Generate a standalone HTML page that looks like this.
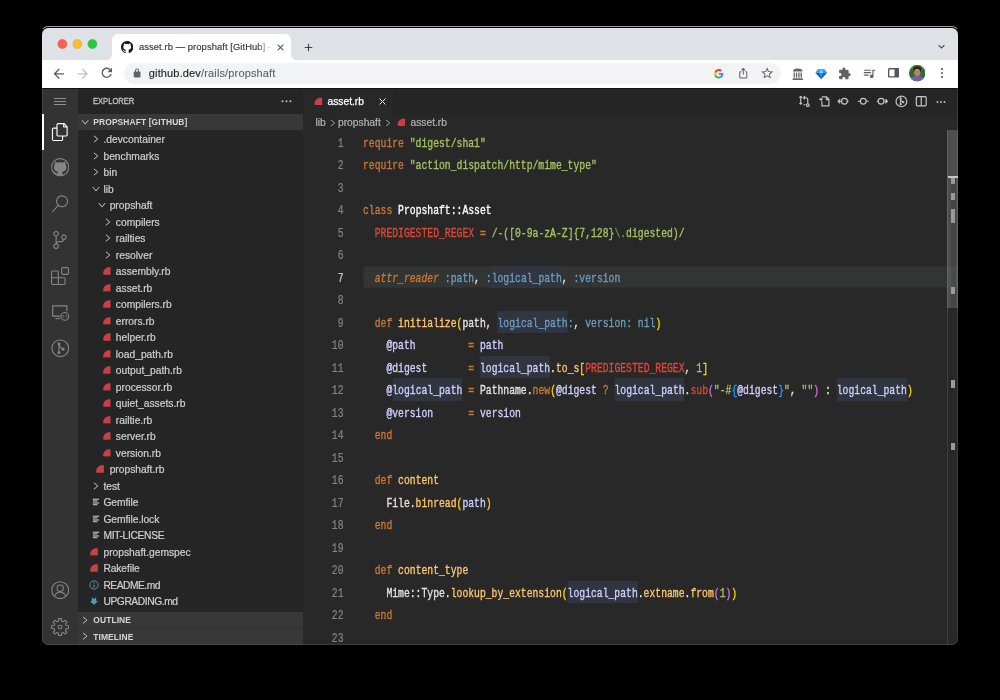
<!DOCTYPE html>
<html><head><meta charset="utf-8"><title>asset.rb — propshaft [GitHub]</title>
<style>
*{box-sizing:border-box}
html,body{margin:0;padding:0;width:1000px;height:700px;overflow:hidden;background:#000}
body{font-family:"Liberation Sans",sans-serif;position:relative}
.win{position:absolute;left:42px;top:27.8px;width:915.9px;height:617px;overflow:hidden;border-radius:6.5px;background:#282828}
.ring{position:absolute;left:40.2px;top:26.1px;width:919.6px;height:30px;border-radius:8.5px 8.5px 0 0;border:0.9px solid transparent;border-top-color:#9a9a9a;border-bottom:0}
.edge{position:absolute;left:42px;top:27.8px;width:915.9px;height:617px;border-radius:6.5px;box-shadow:inset 0 0 0 0.8px rgba(255,255,255,0.13)}
.pg{position:absolute;left:-42px;top:-27.8px;width:1000px;height:700px;will-change:transform;-webkit-font-smoothing:antialiased}
.abs{position:absolute}
/* chrome */
.tabbar{left:42px;top:27px;width:916px;height:33px;background:#dee1e6}
.tab{left:112px;top:34px;width:179px;height:26px;background:#fff;border-radius:6px 6px 0 0}
.tabcurve{width:6px;height:6px;top:54px;background:radial-gradient(circle at 0 0,#dee1e6 6px,#fff 6.5px)}
.toolbar{left:42px;top:60px;width:916px;height:27.5px;background:#fff}
.tsep{left:42px;top:87.5px;width:916px;height:1.3px;background:#131313}
.omni{left:123.6px;top:63px;width:657.2px;height:20.8px;border-radius:10.4px;background:#f1f3f4}
.tl{width:9.2px;height:9.2px;border-radius:50%;top:39.4px}
.ttitle{left:139px;top:41.1px;font-size:9.4px;color:#33373b;-webkit-text-stroke:0.15px currentColor;white-space:nowrap;width:134px;overflow:hidden;letter-spacing:0.08px;-webkit-mask-image:linear-gradient(90deg,#000 118px,transparent 133px)}
.url{left:148.8px;top:67px;font-size:11px;letter-spacing:0.145px;-webkit-text-stroke:0.12px currentColor;color:#202124;white-space:nowrap}
.url i{font-style:normal;color:#5f6368}
/* vscode */
.act{left:42px;top:88px;width:36px;height:557px;background:#333333}
.side{left:78px;top:88px;width:225px;height:557px;background:#252526}
.edtabs{left:303px;top:88px;width:655px;height:26.25px;background:#252526}
.edtab{left:303px;top:88px;width:90px;height:26.25px;background:#282828}
.editor{left:303px;top:114.25px;width:655px;height:531px;background:#282828}
.shead{left:78px;width:225px;height:16.5px;background:#383838}
.shead b{position:absolute;left:15.3px;top:3.3px;font-size:8.45px;color:#d6d6d6;letter-spacing:0.1px;white-space:nowrap}
.row{position:absolute;left:0;width:303px;height:16.5px}
.row .tx{position:absolute;top:3.4px;font-size:10.25px;color:#d0d0d0;white-space:nowrap;-webkit-text-stroke:0.2px currentColor}
.row .ic{position:absolute;top:0;height:16.5px;width:0}
.row .ic svg{position:absolute;left:0;top:50%;transform:translate(-50%,-50%)}
.ln{position:absolute;left:303px;width:40.5px;height:22.5px;line-height:22.5px;margin-top:2px;-webkit-text-stroke:0.2px currentColor;text-align:right;font-family:"Liberation Mono",monospace;font-size:12.2px;color:#858585;transform:scaleX(0.7992);transform-origin:100% 50%}
.ln.cur{color:#c6c6c6}
.cl{position:absolute;left:362.7px;height:22.5px;line-height:22.5px;margin-top:2px;-webkit-text-stroke:0.34px currentColor;font-family:"Liberation Mono",monospace;font-size:12.2px;white-space:pre;transform:scaleX(0.7992);transform-origin:0 50%;color:#e6e1dc}
.k{color:#cc7833}.s{color:#a5c261}.c{color:#da4939}.y{color:#ffc66d}.w{color:#ffffff}.v{color:#e6e1dc}
.i{color:#d0d0ff}.b{color:#6d9cbe}.g{color:#ffd700}.p{color:#da70d6}.u{color:#179fff}.e{color:#519f50}.pn{color:#e6e1dc}
.hl{background:#30353f;display:inline-block;height:22.5px;position:relative;top:0;margin-top:-2px;padding-top:2px;vertical-align:top}
.curline{left:362.7px;top:265.6px;width:596px;height:22.4px;background:#323534;border:1.6px solid #2d2f2f;border-right:0}
.sb{left:947.2px;top:130.4px;width:11px;height:515px;border-left:1px solid #3d3d3d}
.slider{left:947.2px;top:130.3px;width:11px;height:177.7px;background:rgba(130,130,130,0.42);border-left:1.2px solid rgba(150,150,150,0.14)}
.mk{position:absolute;left:951.1px;width:4px;background:#999999}
.it{font-style:italic}
.bc{top:117px;font-size:10.25px;color:#b4b4b4;-webkit-text-stroke:0.2px currentColor;white-space:nowrap}
</style></head><body>
<div class="ring"></div>
<div class="win"><div class="pg">
<!-- chrome tab strip -->
<div class="abs tabbar"></div>
<div class="abs tab"></div>
<div class="abs tabcurve" style="left:106px;background:radial-gradient(circle at 0 0,#dee1e6 5.7px,#fff 6.3px)"></div>
<div class="abs tabcurve" style="left:291px;background:radial-gradient(circle at 100% 0,#dee1e6 5.7px,#fff 6.3px)"></div>
<svg class="abs" style="left:55px;top:37px" width="45" height="14" viewBox="0 0 45 14"><circle cx="7.4" cy="7" r="4.5" fill="#fe5f57" stroke="#e24b41" stroke-width="0.5"/><circle cx="22.4" cy="7" r="4.5" fill="#febc2e" stroke="#e1a325" stroke-width="0.5"/><circle cx="37.4" cy="7" r="4.5" fill="#28c840" stroke="#1eab2e" stroke-width="0.5"/></svg>
<div class="abs ttitle">asset.rb — propshaft [GitHub] — Visual Studio Code</div>
<div class="abs toolbar"></div>
<div class="abs omni"></div>
<div class="abs url">github.dev<i>/rails/propshaft</i></div>
<!-- vscode -->
<div class="abs act"></div>
<div class="abs side"></div>
<div class="abs edtabs"></div>
<div class="abs edtab"></div>
<div class="abs editor"></div>
<div class="abs" style="left:93.3px;top:96.3px;font-size:8.6px;color:#c4c4c4;-webkit-text-stroke:0.3px currentColor;transform:scaleX(0.883);transform-origin:0 50%">EXPLORER</div>
<div class="abs shead" style="top:114.4px;height:15.8px"><b style="top:2.6px">PROPSHAFT [GITHUB]</b></div>
<div class="row" style="top:130.75px"><span class="ic" style="left:95.95px"><svg class="tw" viewBox="0 0 16 16" width="10.6" height="10.6"><path d="M4.8 3.2 L10.8 8 L4.8 12.8" stroke="#c5c5c5" stroke-width="1.5" fill="none"/></svg></span><span class="tx" style="left:103.45px">.devcontainer</span></div>
<div class="row" style="top:147.25px"><span class="ic" style="left:95.95px"><svg class="tw" viewBox="0 0 16 16" width="10.6" height="10.6"><path d="M4.8 3.2 L10.8 8 L4.8 12.8" stroke="#c5c5c5" stroke-width="1.5" fill="none"/></svg></span><span class="tx" style="left:103.45px">benchmarks</span></div>
<div class="row" style="top:163.75px"><span class="ic" style="left:95.95px"><svg class="tw" viewBox="0 0 16 16" width="10.6" height="10.6"><path d="M4.8 3.2 L10.8 8 L4.8 12.8" stroke="#c5c5c5" stroke-width="1.5" fill="none"/></svg></span><span class="tx" style="left:103.45px">bin</span></div>
<div class="row" style="top:180.25px"><span class="ic" style="left:95.95px"><svg class="tw" viewBox="0 0 16 16" width="10.6" height="10.6"><path d="M3.2 5 L8 11 L12.8 5" stroke="#c5c5c5" stroke-width="1.5" fill="none"/></svg></span><span class="tx" style="left:103.45px">lib</span></div>
<div class="row" style="top:196.75px"><span class="ic" style="left:102.15px"><svg class="tw" viewBox="0 0 16 16" width="10.6" height="10.6"><path d="M3.2 5 L8 11 L12.8 5" stroke="#c5c5c5" stroke-width="1.5" fill="none"/></svg></span><span class="tx" style="left:109.65px">propshaft</span></div>
<div class="row" style="top:213.25px"><span class="ic" style="left:108.35000000000001px"><svg class="tw" viewBox="0 0 16 16" width="10.6" height="10.6"><path d="M4.8 3.2 L10.8 8 L4.8 12.8" stroke="#c5c5c5" stroke-width="1.5" fill="none"/></svg></span><span class="tx" style="left:115.85000000000001px">compilers</span></div>
<div class="row" style="top:229.75px"><span class="ic" style="left:108.35000000000001px"><svg class="tw" viewBox="0 0 16 16" width="10.6" height="10.6"><path d="M4.8 3.2 L10.8 8 L4.8 12.8" stroke="#c5c5c5" stroke-width="1.5" fill="none"/></svg></span><span class="tx" style="left:115.85000000000001px">railties</span></div>
<div class="row" style="top:246.25px"><span class="ic" style="left:108.35000000000001px"><svg class="tw" viewBox="0 0 16 16" width="10.6" height="10.6"><path d="M4.8 3.2 L10.8 8 L4.8 12.8" stroke="#c5c5c5" stroke-width="1.5" fill="none"/></svg></span><span class="tx" style="left:115.85000000000001px">resolver</span></div>
<div class="row" style="top:262.75px"><span class="ic" style="left:106.65px"><svg class="fi" viewBox="0 0 16 16" width="8.8" height="8.800"><path d="M3.2 14.8Q1 14.8 1 12.4C1 6 6 1.2 12.4 1.2L15 1.2L15 14.8Z" fill="#cc3e44"/></svg></span><span class="tx" style="left:115.85000000000001px">assembly.rb</span></div>
<div class="row" style="top:279.25px"><span class="ic" style="left:106.65px"><svg class="fi" viewBox="0 0 16 16" width="8.8" height="8.800"><path d="M3.2 14.8Q1 14.8 1 12.4C1 6 6 1.2 12.4 1.2L15 1.2L15 14.8Z" fill="#cc3e44"/></svg></span><span class="tx" style="left:115.85000000000001px">asset.rb</span></div>
<div class="row" style="top:295.75px"><span class="ic" style="left:106.65px"><svg class="fi" viewBox="0 0 16 16" width="8.8" height="8.800"><path d="M3.2 14.8Q1 14.8 1 12.4C1 6 6 1.2 12.4 1.2L15 1.2L15 14.8Z" fill="#cc3e44"/></svg></span><span class="tx" style="left:115.85000000000001px">compilers.rb</span></div>
<div class="row" style="top:312.25px"><span class="ic" style="left:106.65px"><svg class="fi" viewBox="0 0 16 16" width="8.8" height="8.800"><path d="M3.2 14.8Q1 14.8 1 12.4C1 6 6 1.2 12.4 1.2L15 1.2L15 14.8Z" fill="#cc3e44"/></svg></span><span class="tx" style="left:115.85000000000001px">errors.rb</span></div>
<div class="row" style="top:328.75px"><span class="ic" style="left:106.65px"><svg class="fi" viewBox="0 0 16 16" width="8.8" height="8.800"><path d="M3.2 14.8Q1 14.8 1 12.4C1 6 6 1.2 12.4 1.2L15 1.2L15 14.8Z" fill="#cc3e44"/></svg></span><span class="tx" style="left:115.85000000000001px">helper.rb</span></div>
<div class="row" style="top:345.25px"><span class="ic" style="left:106.65px"><svg class="fi" viewBox="0 0 16 16" width="8.8" height="8.800"><path d="M3.2 14.8Q1 14.8 1 12.4C1 6 6 1.2 12.4 1.2L15 1.2L15 14.8Z" fill="#cc3e44"/></svg></span><span class="tx" style="left:115.85000000000001px">load_path.rb</span></div>
<div class="row" style="top:361.75px"><span class="ic" style="left:106.65px"><svg class="fi" viewBox="0 0 16 16" width="8.8" height="8.800"><path d="M3.2 14.8Q1 14.8 1 12.4C1 6 6 1.2 12.4 1.2L15 1.2L15 14.8Z" fill="#cc3e44"/></svg></span><span class="tx" style="left:115.85000000000001px">output_path.rb</span></div>
<div class="row" style="top:378.25px"><span class="ic" style="left:106.65px"><svg class="fi" viewBox="0 0 16 16" width="8.8" height="8.800"><path d="M3.2 14.8Q1 14.8 1 12.4C1 6 6 1.2 12.4 1.2L15 1.2L15 14.8Z" fill="#cc3e44"/></svg></span><span class="tx" style="left:115.85000000000001px">processor.rb</span></div>
<div class="row" style="top:394.75px"><span class="ic" style="left:106.65px"><svg class="fi" viewBox="0 0 16 16" width="8.8" height="8.800"><path d="M3.2 14.8Q1 14.8 1 12.4C1 6 6 1.2 12.4 1.2L15 1.2L15 14.8Z" fill="#cc3e44"/></svg></span><span class="tx" style="left:115.85000000000001px">quiet_assets.rb</span></div>
<div class="row" style="top:411.25px"><span class="ic" style="left:106.65px"><svg class="fi" viewBox="0 0 16 16" width="8.8" height="8.800"><path d="M3.2 14.8Q1 14.8 1 12.4C1 6 6 1.2 12.4 1.2L15 1.2L15 14.8Z" fill="#cc3e44"/></svg></span><span class="tx" style="left:115.85000000000001px">railtie.rb</span></div>
<div class="row" style="top:427.75px"><span class="ic" style="left:106.65px"><svg class="fi" viewBox="0 0 16 16" width="8.8" height="8.800"><path d="M3.2 14.8Q1 14.8 1 12.4C1 6 6 1.2 12.4 1.2L15 1.2L15 14.8Z" fill="#cc3e44"/></svg></span><span class="tx" style="left:115.85000000000001px">server.rb</span></div>
<div class="row" style="top:444.25px"><span class="ic" style="left:106.65px"><svg class="fi" viewBox="0 0 16 16" width="8.8" height="8.800"><path d="M3.2 14.8Q1 14.8 1 12.4C1 6 6 1.2 12.4 1.2L15 1.2L15 14.8Z" fill="#cc3e44"/></svg></span><span class="tx" style="left:115.85000000000001px">version.rb</span></div>
<div class="row" style="top:460.75px"><span class="ic" style="left:100.45px"><svg class="fi" viewBox="0 0 16 16" width="8.8" height="8.800"><path d="M3.2 14.8Q1 14.8 1 12.4C1 6 6 1.2 12.4 1.2L15 1.2L15 14.8Z" fill="#cc3e44"/></svg></span><span class="tx" style="left:109.65px">propshaft.rb</span></div>
<div class="row" style="top:477.25px"><span class="ic" style="left:95.95px"><svg class="tw" viewBox="0 0 16 16" width="10.6" height="10.6"><path d="M4.8 3.2 L10.8 8 L4.8 12.8" stroke="#c5c5c5" stroke-width="1.5" fill="none"/></svg></span><span class="tx" style="left:103.45px">test</span></div>
<div class="row" style="top:493.75px"><span class="ic" style="left:95.85000000000001px"><svg class="fi" viewBox="0 0 16 16" width="7.4" height="8.400"><path d="M1 2h14M1 6h10M1 10h14M1 14h10" stroke="#d4d7d6" stroke-width="2.2" fill="none"/></svg></span><span class="tx" style="left:103.45px;letter-spacing:-0.05px">Gemfile</span></div>
<div class="row" style="top:510.25px"><span class="ic" style="left:95.85000000000001px"><svg class="fi" viewBox="0 0 16 16" width="7.4" height="8.400"><path d="M1 2h14M1 6h10M1 10h14M1 14h10" stroke="#d4d7d6" stroke-width="2.2" fill="none"/></svg></span><span class="tx" style="left:103.45px;letter-spacing:-0.05px">Gemfile.lock</span></div>
<div class="row" style="top:526.75px"><span class="ic" style="left:95.85000000000001px"><svg class="fi" viewBox="0 0 16 16" width="7.4" height="8.400"><path d="M1 2h14M1 6h10M1 10h14M1 14h10" stroke="#d4d7d6" stroke-width="2.2" fill="none"/></svg></span><span class="tx" style="left:103.45px;letter-spacing:-0.33px">MIT-LICENSE</span></div>
<div class="row" style="top:543.25px"><span class="ic" style="left:94.25px"><svg class="fi" viewBox="0 0 16 16" width="8.8" height="8.800"><path d="M3.2 14.8Q1 14.8 1 12.4C1 6 6 1.2 12.4 1.2L15 1.2L15 14.8Z" fill="#cc3e44"/></svg></span><span class="tx" style="left:103.45px">propshaft.gemspec</span></div>
<div class="row" style="top:559.75px"><span class="ic" style="left:94.25px"><svg class="fi" viewBox="0 0 16 16" width="8.8" height="8.800"><path d="M3.2 14.8Q1 14.8 1 12.4C1 6 6 1.2 12.4 1.2L15 1.2L15 14.8Z" fill="#cc3e44"/></svg></span><span class="tx" style="left:103.45px;letter-spacing:-0.1px">Rakefile</span></div>
<div class="row" style="top:576.25px"><span class="ic" style="left:94.45px"><svg class="fi" viewBox="0 0 16 16" width="10" height="10"><circle cx="8" cy="8" r="6.6" stroke="#519aba" stroke-width="1.5" fill="none"/><path d="M8 7v5" stroke="#519aba" stroke-width="1.8"/><circle cx="8" cy="4.6" r="1.1" fill="#519aba"/></svg></span><span class="tx" style="left:103.45px;letter-spacing:-0.5px">README.md</span></div>
<div class="row" style="top:592.75px"><span class="ic" style="left:94.45px"><svg class="fi" viewBox="0 0 16 16" width="9.400" height="9.800"><path d="M4.3 1.5 L8 4.6 L11.7 1.5 V8 H14.8 L8 15 L1.2 8 H4.3 Z" fill="#519aba"/></svg></span><span class="tx" style="left:103.45px;letter-spacing:-0.42px">UPGRADING.md</span></div>
<div class="abs shead" style="top:611.5px"><b>OUTLINE</b></div>
<div class="abs shead" style="top:628px;border-top:1px solid rgba(0,0,0,0.12)"><b>TIMELINE</b></div>
<div class="abs tsep"></div>
<div class="abs" style="left:42px;top:114.25px;width:1.7px;height:36px;background:#ffffff"></div>
<!-- editor tab -->
<div class="abs" style="left:327.5px;top:95.7px;font-size:10.25px;color:#ffffff;-webkit-text-stroke:0.25px #fff">asset.rb</div>
<div class="abs bc" style="left:315.5px">lib</div>
<div class="abs bc" style="left:338px">propshaft</div>
<div class="abs bc" style="left:410.5px">asset.rb</div>
<svg class="abs" style="left:120.70px;top:41.00px" width="12.4" height="12.4" viewBox="0 0 16 16" ><path d="M8 0C3.58 0 0 3.58 0 8c0 3.54 2.29 6.53 5.47 7.59.4.07.55-.17.55-.38 0-.19-.01-.82-.01-1.49-2.01.37-2.53-.49-2.69-.94-.09-.23-.48-.94-.82-1.13-.28-.15-.68-.52-.01-.53.63-.01 1.08.58 1.23.82.72 1.21 1.87.87 2.33.66.07-.52.28-.87.51-1.07-1.78-.2-3.64-.89-3.64-3.95 0-.87.31-1.59.82-2.15-.08-.2-.36-1.02.08-2.12 0 0 .67-.21 2.2.82.64-.18 1.32-.27 2-.27.68 0 1.36.09 2 .27 1.53-1.04 2.2-.82 2.2-.82.44 1.1.16 1.92.08 2.12.51.56.82 1.27.82 2.15 0 3.07-1.87 3.75-3.65 3.95.29.25.54.73.54 1.48 0 1.07-.01 1.93-.01 2.2 0 .21.15.46.55.38A8.013 8.013 0 0 0 16 8c0-4.42-3.58-8-8-8z" fill="#16191c"/></svg>
<svg class="abs" style="left:274.50px;top:41.50px" width="11" height="11" viewBox="0 0 24 24" ><path d="M19 6.41L17.59 5 12 10.59 6.41 5 5 6.41 10.59 12 5 17.59 6.41 19 12 13.41 17.59 19 19 17.59 13.41 12z" fill="#45494d"/></svg>
<svg class="abs" style="left:301.80px;top:40.50px" width="13" height="13" viewBox="0 0 24 24" ><path d="M19 13h-6v6h-2v-6H5v-2h6V5h2v6h6v2z" fill="#3c4043"/></svg>
<svg class="abs" style="left:934.90px;top:40.30px" width="13" height="13" viewBox="0 0 24 24" ><path d="M7.41 8.59L12 13.17l4.59-4.58L18 10l-6 6-6-6 1.41-1.41z" fill="#3c4043"/></svg>
<svg class="abs" style="left:50.80px;top:65.50px" width="15.6" height="15.6" viewBox="0 0 24 24" ><path d="M20 11H7.83l5.59-5.59L12 4l-8 8 8 8 1.41-1.41L7.83 13H20v-2z" fill="#5a5e63"/></svg>
<svg class="abs" style="left:74.80px;top:65.50px" width="15.6" height="15.6" viewBox="0 0 24 24" ><path d="M12 4l-1.41 1.41L16.17 11H4v2h12.17l-5.58 5.59L12 20l8-8z" fill="#bdc0c4"/></svg>
<svg class="abs" style="left:98.80px;top:65.40px" width="15.6" height="15.6" viewBox="0 0 24 24" ><path d="M17.65 6.35C16.2 4.9 14.21 4 12 4c-4.42 0-7.99 3.58-7.99 8s3.57 8 7.99 8c3.73 0 6.84-2.55 7.73-6h-2.08c-.82 2.33-3.04 4-5.65 4-3.31 0-6-2.69-6-6s2.69-6 6-6c1.66 0 3.14.69 4.22 1.78L13 11h7V4l-2.35 2.35z" fill="#5a5e63"/></svg>
<svg class="abs" style="left:131.50px;top:67.90px" width="10.2" height="10.2" viewBox="0 0 24 24" ><path fill-rule="evenodd" d="M18 8.5h-1.2V6.3c0-2.7-2.1-4.9-4.8-4.9S7.2 3.6 7.2 6.3v2.2H6c-1.1 0-2 .9-2 2v9.6c0 1.1.9 2 2 2h12c1.1 0 2-.9 2-2v-9.6c0-1.1-.9-2-2-2zM9.5 6.3c0-1.4 1.1-2.6 2.5-2.6s2.5 1.2 2.500 2.6v2.2h-5z" fill="#5f6368"/></svg>
<svg class="abs" style="left:713.20px;top:67.80px" width="11.6" height="11.6" viewBox="0 0 24 24" ><path d="M21.35 12.2c0-.7-.06-1.3-.18-1.9H12v3.7h5.250c-.230 1.200-.900 2.200-1.950 2.900v2.400h3.100c1.850-1.700 2.950-4.200 2.950-7.100z" fill="#4285f4"/><path d="M12 21.700c2.600 0 4.800-.850 6.400-2.350l-3.100-2.400c-.850.600-1.950.950-3.300.950-2.500 0-4.650-1.700-5.400-4H3.400v2.500C5 19.500 8.250 21.700 12 21.700z" fill="#34a853"/><path d="M6.600 13.900c-.200-.600-.300-1.200-.300-1.900s.100-1.300.300-1.900V7.600H3.400C2.750 8.900 2.400 10.400 2.400 12s.350 3.100 1 4.400l3.200-2.500z" fill="#fbbc05"/><path d="M12 6.100c1.400 0 2.700.500 3.700 1.450l2.750-2.750C16.800 3.250 14.600 2.300 12 2.300 8.250 2.300 5 4.500 3.400 7.600l3.200 2.500c.750-2.300 2.900-4 5.400-4z" fill="#ea4335"/></svg>
<svg class="abs" style="left:737.50px;top:66.90px" width="10.6" height="12.6" viewBox="0 0 24 28" ><path d="M7.500 10.500H5.500a1.500 1.500 0 0 0-1.500 1.500v11a1.500 1.500 0 0 0 1.500 1.500h13a1.500 1.500 0 0 0 1.500-1.500v-11a1.500 1.500 0 0 0-1.500-1.500h-2" fill="none" stroke="#5f6368" stroke-width="2.300"/><path d="M12 17V3.500M7.800 7.300L12 3.100l4.200 4.200" fill="none" stroke="#5f6368" stroke-width="2.300"/></svg>
<svg class="abs" style="left:759.80px;top:65.80px" width="14.4" height="14.4" viewBox="0 0 24 24" ><path d="M22 9.240l-7.190-.620L12 2 9.190 8.630 2 9.240l5.460 4.730L5.820 21 12 17.270 18.180 21l-1.630-7.030L22 9.240zM12 15.400l-3.760 2.270 1-4.280-3.320-2.880 4.380-.380L12 6.100l1.710 4.040 4.380.380-3.320 2.880 1 4.280L12 15.400z" fill="#5f6368"/></svg>
<svg class="abs" style="left:790.65px;top:66.85px" width="13.5" height="13.5" viewBox="0 0 24 24" ><path d="M3.6 8.200V7.200Q3.600 2.600 12 2.600T20.400 7.200V8.200Z" fill="#5f6368"/><path d="M5.800 9.600v9.200M9.900 9.600v9.200M14.100 9.600v9.200M18.200 9.600v9.200" stroke="#5f6368" stroke-width="2.300"/><rect x="3.400" y="19.400" width="17.200" height="1.500" fill="#5f6368"/><rect x="2.600" y="21.300" width="18.800" height="1.700" fill="#5f6368"/></svg>
<svg class="abs" style="left:815.20px;top:67.60px" width="12.4" height="12.4" viewBox="0 0 24 24" ><path d="M5.500 3h13l4.500 6.500L12 22 1 9.500z" fill="#0f5fc4"/><path d="M5.500 3h13l4.500 6.500H1z" fill="#3aa0f5"/><path d="M8.200 9.500L12 3l3.800 6.500L12 22z" fill="#1e8cf0"/><path d="M8.200 9.500L12 3l3.800 6.500z" fill="#9bd6ff"/></svg>
<svg class="abs" style="left:838.30px;top:66.50px" width="13.4" height="13.4" viewBox="0 0 24 24" ><path d="M20.500 11H19V7c0-1.100-.900-2-2-2h-4V3.500C13 2.120 11.880 1 10.500 1S8 2.120 8 3.500V5H4c-1.100 0-1.990.900-1.990 2v3.800H3.500c1.490 0 2.700 1.210 2.700 2.700s-1.210 2.700-2.700 2.700H2V20c0 1.100.900 2 2 2h3.800v-1.500c0-1.490 1.210-2.700 2.700-2.700 1.490 0 2.700 1.210 2.700 2.700V22H17c1.100 0 2-.900 2-2v-4h1.500c1.380 0 2.500-1.120 2.500-2.500S21.880 11 20.500 11z" fill="#5f6368"/></svg>
<svg class="abs" style="left:861.90px;top:65.90px" width="14.6" height="14.6" viewBox="0 0 24 24" ><path d="M15 6H3v2h12V6zm0 4H3v2h12v-2zM3 16h8v-2H3v2zM17 6v8.180c-.310-.110-.650-.180-1-.180-1.660 0-3 1.340-3 3s1.340 3 3 3 3-1.340 3-3V8h3V6h-5z" fill="#5f6368"/></svg>
<svg class="abs" style="left:887.50px;top:68.40px" width="11.4" height="9.6" viewBox="0 0 22 18" ><rect x="1.200" y="1.200" width="19.600" height="15.600" rx="1.500" fill="none" stroke="#54585d" stroke-width="2.700"/><rect x="12.500" y="1" width="8.500" height="16" fill="#54585d"/></svg>
<svg class="abs" style="left:909.00px;top:65.20px" width="16.4" height="16.4" viewBox="0 0 32 32" ><defs><clipPath id="avc"><circle cx="16" cy="16" r="16"/></clipPath></defs><g clip-path="url(#avc)"><rect width="32" height="32" fill="#2f6b3a"/><rect x="0" y="0" width="32" height="10" fill="#3d7f45"/><ellipse cx="16" cy="9" rx="8" ry="6.500" fill="#2a1f1a"/><ellipse cx="16" cy="14.500" rx="6.200" ry="7.300" fill="#b9805e"/><path d="M2 32c1-8 6-10.500 14-10.500S29 24 30 32z" fill="#7a5aa0"/><path d="M0 26h9v6H0z" fill="#3a8ad0"/></g></svg>
<svg class="abs" style="left:934.80px;top:66.30px" width="14" height="14" viewBox="0 0 24 24" ><circle cx="12" cy="5.200" r="1.900" fill="#5f6368"/><circle cx="12" cy="12" r="1.900" fill="#5f6368"/><circle cx="12" cy="18.800" r="1.900" fill="#5f6368"/></svg>
<svg class="abs" style="left:54.00px;top:97.00px" width="12" height="9" viewBox="0 0 12 9" ><path d="M0 1.500h12M0 4.500h12M0 7.500h12" stroke="#9c9c9c" stroke-width="0.900"/></svg>
<svg class="abs" style="left:51.20px;top:122.80px" width="17.6" height="18" viewBox="0 0 23 24" ><path d="M17.500 0h-9L7 1.500V6H2.500L1 7.500v15.070L2.500 24h12.070L16 22.570V18h4.700l1.300-1.430V4.500L17.500 0zm0 2.120l2.380 2.380H17.500V2.120zm-3 20.380h-12v-15H7v9.070L8.500 18h6v4.500zm6-6h-12v-15H16V6h4.500v10.500z" fill="#ffffff"/></svg>
<svg class="abs" style="left:50.80px;top:158.40px" width="18.4" height="18.4" viewBox="0 0 24 24" ><defs><clipPath id="ghc"><circle cx="12" cy="12" r="11.2"/></clipPath></defs><g clip-path="url(#ghc)"><circle cx="12" cy="12" r="11.2" fill="#858585"/><g transform="translate(-0.8 -0.5) scale(1.6)"><path d="M8 0C3.58 0 0 3.58 0 8c0 3.54 2.29 6.53 5.47 7.59.4.07.55-.17.55-.38 0-.19-.01-.82-.01-1.49-2.01.37-2.53-.49-2.69-.94-.09-.23-.48-.94-.82-1.13-.28-.15-.68-.52-.01-.53.63-.01 1.08.58 1.23.82.72 1.21 1.87.87 2.33.66.07-.52.28-.87.51-1.07-1.78-.2-3.64-.89-3.64-3.95 0-.87.31-1.59.82-2.15-.08-.2-.36-1.02.08-2.12 0 0 .67-.21 2.2.82.64-.18 1.32-.27 2-.27.68 0 1.36.09 2 .27 1.53-1.04 2.2-.82 2.2-.82.44 1.1.16 1.92.08 2.12.51.56.82 1.27.82 2.15 0 3.07-1.87 3.75-3.65 3.95.29.25.54.73.54 1.48 0 1.07-.01 1.93-.01 2.2 0 .21.15.46.55.38A8.013 8.013 0 0 0 16 8c0-4.42-3.58-8-8-8z" fill="#333333"/></g></g><circle cx="12" cy="12" r="11.2" fill="none" stroke="#858585" stroke-width="1.400"/></svg>
<svg class="abs" style="left:51.30px;top:194.60px" width="17.4" height="18" viewBox="0 0 24 24" ><path d="M15.250 0a8.250 8.250 0 0 0-6.180 13.720L1 22.880l1.120 1 8.050-9.120A8.251 8.251 0 1 0 15.250.010V0zm0 15a6.750 6.750 0 1 1 0-13.500 6.750 6.750 0 0 1 0 13.500z" fill="#858585"/></svg>
<svg class="abs" style="left:51.40px;top:231.00px" width="18" height="18" viewBox="0 0 24 24" ><path d="M21.007 8.222A3.738 3.738 0 0 0 15.045 5.200a3.737 3.737 0 0 0 1.156 6.583 2.988 2.988 0 0 1-2.668 1.670h-2.990a4.456 4.456 0 0 0-2.989 1.165V7.400a3.737 3.737 0 1 0-1.494 0v9.117a3.776 3.776 0 1 0 1.816.099 2.990 2.990 0 0 1 2.668-1.667h2.990a4.484 4.484 0 0 0 4.223-3.039 3.736 3.736 0 0 0 3.250-3.687zM4.565 3.738a2.242 2.242 0 1 1 4.484 0 2.242 2.242 0 0 1-4.484 0zm4.484 16.441a2.242 2.242 0 1 1-4.484 0 2.242 2.242 0 0 1 4.484 0zm8.221-9.715a2.242 2.242 0 1 1 0-4.485 2.242 2.242 0 0 1 0 4.485z" fill="#858585"/></svg>
<svg class="abs" style="left:51.00px;top:267.20px" width="18" height="18" viewBox="0 0 24 24" ><path d="M13.500 1.500L15 0h7.500L24 1.500V9l-1.500 1.500H15L13.500 9V1.500zm1.500 0V9h7.500V1.500H15zM0 15V6l1.500-1.500H9L10.500 6v7.500H18l1.500 1.500v7.500L18 24H1.500L0 22.500V15zm9-1.500V6H1.500v7.500H9zM9 15H1.500v7.500H9V15zm1.500 7.500H18V15h-7.500v7.500z" fill="#858585"/></svg>
<svg class="abs" style="left:51.40px;top:303.40px" width="18.4" height="18.4" viewBox="0 0 24 24" ><path d="M12.500 17.200H2.200V3.800h18.600v7" fill="none" stroke="#858585" stroke-width="1.500"/><path d="M6 20.300h5.500" stroke="#858585" stroke-width="1.500"/><circle cx="18" cy="17.500" r="5" fill="none" stroke="#858585" stroke-width="1.400"/><path d="M16.800 15.600l-1.700 1.900 1.700 1.900M19.200 15.600l1.700 1.900-1.700 1.900" fill="none" stroke="#858585" stroke-width="1.100"/></svg>
<svg class="abs" style="left:50.70px;top:339.10px" width="18.6" height="18.6" viewBox="0 0 24 24" ><circle cx="12" cy="12" r="10.800" fill="none" stroke="#858585" stroke-width="1.400"/><path d="M10.300 6.500v11M10.300 8.500l5 4.500" stroke="#858585" stroke-width="1.400" fill="none"/><circle cx="10.300" cy="6.500" r="1.900" fill="#858585"/><circle cx="10.300" cy="17.800" r="1.900" fill="#858585"/><circle cx="15.600" cy="13.200" r="1.900" fill="#858585"/></svg>
<svg class="abs" style="left:50.80px;top:581.00px" width="18.4" height="18.4" viewBox="0 0 24 24" ><circle cx="12" cy="12" r="11" fill="none" stroke="#858585" stroke-width="1.400"/><circle cx="12" cy="9.400" r="4.100" fill="none" stroke="#858585" stroke-width="1.400"/><path d="M4.600 19.800c1.200-3.400 4-5.200 7.400-5.200s6.200 1.800 7.400 5.200" fill="none" stroke="#858585" stroke-width="1.400"/></svg>
<svg class="abs" style="left:50.90px;top:617.50px" width="18.2" height="18.2" viewBox="0 0 24 24" ><path d="M10.02 4.04 L10.14 0.85 L13.86 0.85 L13.98 4.04 L16.23 4.97 L18.57 2.81 L21.19 5.43 L19.03 7.77 L19.96 10.02 L23.15 10.14 L23.15 13.86 L19.96 13.98 L19.03 16.23 L21.19 18.57 L18.57 21.19 L16.23 19.03 L13.98 19.96 L13.86 23.15 L10.14 23.15 L10.02 19.96 L7.77 19.03 L5.43 21.19 L2.81 18.57 L4.97 16.23 L4.04 13.98 L0.85 13.86 L0.85 10.14 L4.04 10.02 L4.97 7.77 L2.81 5.43 L5.43 2.81 L7.77 4.97 Z" fill="none" stroke="#858585" stroke-width="1.400" stroke-linejoin="round"/><circle cx="12" cy="12" r="2.500" fill="none" stroke="#858585" stroke-width="1.400"/></svg>
<svg class="abs" style="left:280.70px;top:99.00px" width="11" height="4.4" viewBox="0 0 10 4" ><circle cx="1.400" cy="2" r="0.900" fill="#c5c5c5"/><circle cx="5" cy="2" r="0.900" fill="#c5c5c5"/><circle cx="8.600" cy="2" r="0.900" fill="#c5c5c5"/></svg>
<svg class="abs" style="left:80.20px;top:117.20px" width="10.4" height="10.4" viewBox="0 0 16 16" ><path d="M3.200 5L8 11l4.800-6" stroke="#c5c5c5" stroke-width="1.500" fill="none"/></svg>
<svg class="abs" style="left:80.40px;top:614.60px" width="10.4" height="10.4" viewBox="0 0 16 16" ><path d="M4.800 3.200L10.800 8l-6 4.800" stroke="#c5c5c5" stroke-width="1.500" fill="none"/></svg>
<svg class="abs" style="left:80.40px;top:631.10px" width="10.4" height="10.4" viewBox="0 0 16 16" ><path d="M4.800 3.200L10.800 8l-6 4.800" stroke="#c5c5c5" stroke-width="1.500" fill="none"/></svg>
<svg class="abs" style="left:377.50px;top:96.90px" width="9" height="9" viewBox="0 0 16 16" ><path d="M2.600 2.600l10.800 10.800M13.400 2.600L2.600 13.400" stroke="#e8e8e8" stroke-width="1.750"/></svg>
<svg class="abs" style="left:327.60px;top:117.60px" width="10" height="10" viewBox="0 0 16 16" ><path d="M4.800 3.200L10.800 8l-6 4.800" stroke="#a8a8a8" stroke-width="1.500" fill="none"/></svg>
<svg class="abs" style="left:383.20px;top:117.60px" width="10" height="10" viewBox="0 0 16 16" ><path d="M4.800 3.200L10.800 8l-6 4.800" stroke="#a8a8a8" stroke-width="1.500" fill="none"/></svg>
<svg class="abs" style="left:314.00px;top:96.85px" width="8.6" height="8.7" viewBox="0 0 16 16" ><path d="M3.2 14.8Q1 14.8 1 12.4C1 6 6 1.2 12.4 1.2L15 1.2L15 14.8Z" fill="#cc3e44"/></svg>
<svg class="abs" style="left:397.20px;top:118.05px" width="8.6" height="8.7" viewBox="0 0 16 16" ><path d="M3.2 14.8Q1 14.8 1 12.4C1 6 6 1.2 12.4 1.2L15 1.2L15 14.8Z" fill="#cc3e44"/></svg>
<svg class="abs" style="left:797.75px;top:95.25px" width="12.5" height="12.5" viewBox="0 0 16 16" ><circle cx="3.500" cy="3" r="1.700" fill="#c5c5c5"/><circle cx="12.500" cy="13" r="1.700" fill="none" stroke="#c5c5c5" stroke-width="1.500"/><path d="M3.500 4.500v7.500M12.500 11.500V6c0-1.500-1-2.500-2.500-2.500H7.500M9 1.500L7 3.500l2 2M3.500 12l-1.500-1.800M3.500 12L5 10.200M7 12.500h2.500" fill="none" stroke="#c5c5c5" stroke-width="1.500"/></svg>
<svg class="abs" style="left:817.75px;top:95.25px" width="12.5" height="12.5" viewBox="0 0 16 16" ><path d="M5 2.500h6l3 3V14H5V8" fill="none" stroke="#c5c5c5" stroke-width="1.500"/><path d="M10.800 2.800V6H14" fill="none" stroke="#c5c5c5" stroke-width="1.500"/><path d="M1.500 5.500H5M3.500 3.700L5.200 5.500 3.500 7.300" fill="none" stroke="#c5c5c5" stroke-width="1.500"/></svg>
<svg class="abs" style="left:837.15px;top:95.25px" width="12.5" height="12.5" viewBox="0 0 16 16" ><circle cx="9.500" cy="8" r="3.700" fill="none" stroke="#c5c5c5" stroke-width="1.500"/><path d="M5.800 8H1.500M4 5.400L1.400 8l2.600 2.600M13.200 8H15" fill="none" stroke="#c5c5c5" stroke-width="1.500"/></svg>
<svg class="abs" style="left:856.55px;top:95.25px" width="12.5" height="12.5" viewBox="0 0 16 16" ><circle cx="8" cy="8" r="3.700" fill="none" stroke="#c5c5c5" stroke-width="1.500"/><path d="M4.300 8H1M11.700 8H15" fill="none" stroke="#c5c5c5" stroke-width="1.500"/></svg>
<svg class="abs" style="left:875.75px;top:95.25px" width="12.5" height="12.5" viewBox="0 0 16 16" ><circle cx="6.500" cy="8" r="3.700" fill="none" stroke="#c5c5c5" stroke-width="1.500"/><path d="M10.200 8h4.300M12 5.400L14.600 8l-2.600 2.600M2.800 8H1" fill="none" stroke="#c5c5c5" stroke-width="1.500"/></svg>
<svg class="abs" style="left:895.20px;top:95.10px" width="12.8" height="12.8" viewBox="0 0 16 16" ><circle cx="8" cy="8" r="6.700" fill="none" stroke="#c5c5c5" stroke-width="1.500"/><path d="M7 4.500v7M7 6l3 2.800" stroke="#c5c5c5" stroke-width="1.400" fill="none"/><circle cx="7" cy="4.400" r="1.450" fill="#c5c5c5"/><circle cx="7" cy="11.600" r="1.450" fill="#c5c5c5"/><circle cx="10.300" cy="9" r="1.450" fill="#c5c5c5"/></svg>
<svg class="abs" style="left:915.25px;top:95.25px" width="12.5" height="12.5" viewBox="0 0 16 16" ><rect x="1.700" y="2.200" width="12.600" height="11.600" rx="1.200" fill="none" stroke="#c5c5c5" stroke-width="1.550"/><path d="M8 2.200v11.600" stroke="#c5c5c5" stroke-width="1.550"/></svg>
<svg class="abs" style="left:935.60px;top:99.60px" width="10" height="4" viewBox="0 0 10 4" ><circle cx="1.500" cy="2" r="0.950" fill="#c5c5c5"/><circle cx="5" cy="2" r="0.950" fill="#c5c5c5"/><circle cx="8.500" cy="2" r="0.950" fill="#c5c5c5"/></svg>
<!-- code -->
<div class="abs curline"></div>
<div class="ln" style="top:130.75px">1</div>
<div class="cl" style="top:130.75px"><span class="k">require</span> <span class="s">&quot;digest/sha1&quot;</span></div>
<div class="ln" style="top:153.25px">2</div>
<div class="cl" style="top:153.25px"><span class="k">require</span> <span class="s">&quot;action_dispatch/http/mime_type&quot;</span></div>
<div class="ln" style="top:175.75px">3</div>
<div class="ln" style="top:198.25px">4</div>
<div class="cl" style="top:198.25px"><span class="k">class</span> <span class="w">Propshaft::Asset</span></div>
<div class="ln" style="top:220.75px">5</div>
<div class="cl" style="top:220.75px">  <span class="c">PREDIGESTED_REGEX</span> <span class="k">=</span> <span class="s">/-([0-9a-zA-Z]{7,128}</span><span class="e">\.</span><span class="s">digested)/</span></div>
<div class="ln" style="top:243.25px">6</div>
<div class="ln cur" style="top:265.75px">7</div>
<div class="cl" style="top:265.75px">  <span class="k it">attr_reader</span> <span class="b">:path</span><span class="v">,</span> <span class="b">:</span><span class="hl"><span class="b">logical_path</span></span><span class="v">,</span> <span class="b">:version</span></div>
<div class="ln" style="top:288.25px">8</div>
<div class="ln" style="top:310.75px">9</div>
<div class="cl" style="top:310.75px">  <span class="k">def</span> <span class="y">initialize</span><span class="g">(</span><span class="v">path,</span> <span class="hl"><span class="b">logical_path</span></span><span class="b">:</span><span class="v">,</span> <span class="b">version:</span> <span class="b">nil</span><span class="g">)</span></div>
<div class="ln" style="top:333.25px">10</div>
<div class="cl" style="top:333.25px">    <span class="i">@path</span>         <span class="k">=</span> <span class="i">path</span></div>
<div class="ln" style="top:355.75px">11</div>
<div class="cl" style="top:355.75px">    <span class="i">@digest</span>       <span class="k">=</span> <span class="hl"><span class="i">logical_path</span></span><span class="v">.</span><span class="y">to_s</span><span class="g">[</span><span class="c">PREDIGESTED_REGEX</span><span class="v">,</span> <span class="s">1</span><span class="g">]</span></div>
<div class="ln" style="top:378.25px">12</div>
<div class="cl" style="top:378.25px">    <span class="i">@</span><span class="hl"><span class="i">logical_path</span></span> <span class="k">=</span> <span class="pn">Pathname</span><span class="v">.</span><span class="k">new</span><span class="g">(</span><span class="i">@digest</span> <span class="k">?</span> <span class="hl"><span class="i">logical_path</span></span><span class="v">.</span><span class="c">sub</span><span class="p">(</span><span class="s">&quot;-#</span><span class="u">{</span><span class="i">@digest</span><span class="u">}</span><span class="s">&quot;</span><span class="v">,</span> <span class="s">&quot;&quot;</span><span class="p">)</span> <span class="v">:</span> <span class="hl"><span class="i">logical_path</span></span><span class="g">)</span></div>
<div class="ln" style="top:400.75px">13</div>
<div class="cl" style="top:400.75px">    <span class="i">@version</span>      <span class="k">=</span> <span class="i">version</span></div>
<div class="ln" style="top:423.25px">14</div>
<div class="cl" style="top:423.25px">  <span class="k">end</span></div>
<div class="ln" style="top:445.75px">15</div>
<div class="ln" style="top:468.25px">16</div>
<div class="cl" style="top:468.25px">  <span class="k">def</span> <span class="y">content</span></div>
<div class="ln" style="top:490.75px">17</div>
<div class="cl" style="top:490.75px">    <span class="v">File.</span><span class="y">binread</span><span class="g">(</span><span class="i">path</span><span class="g">)</span></div>
<div class="ln" style="top:513.25px">18</div>
<div class="cl" style="top:513.25px">  <span class="k">end</span></div>
<div class="ln" style="top:535.75px">19</div>
<div class="ln" style="top:558.25px">20</div>
<div class="cl" style="top:558.25px">  <span class="k">def</span> <span class="y">content_type</span></div>
<div class="ln" style="top:580.75px">21</div>
<div class="cl" style="top:580.75px">    <span class="v">Mime::Type.</span><span class="y">lookup_by_extension</span><span class="g">(</span><span class="hl"><span class="i">logical_path</span></span><span class="v">.</span><span class="y">extname</span><span class="v">.</span><span class="y">from</span><span class="p">(</span><span class="s">1</span><span class="p">)</span><span class="g">)</span></div>
<div class="ln" style="top:603.25px">22</div>
<div class="cl" style="top:603.25px">  <span class="k">end</span></div>
<div class="ln" style="top:625.75px">23</div>
<div class="abs sb"></div>
<div class="abs slider"></div>
<div class="abs" style="left:950.7px;top:178px;width:5px;height:130px;background:rgba(0,0,0,0.13)"></div>
<div class="abs" style="left:947.8px;top:175.8px;width:10.2px;height:2.2px;background:#c6c6c6"></div>
<div class="mk" style="top:178px;height:6.4px"></div>
<div class="mk" style="top:193px;height:7px"></div>
<div class="mk" style="top:208.6px;height:14.8px"></div>
<div class="mk" style="top:286.6px;height:7.4px"></div>
<div class="mk" style="top:379.7px;height:7.9px"></div>
<div class="mk" style="top:443px;height:7.2px"></div>

</div></div>
<div class="edge"></div>
</body></html>
